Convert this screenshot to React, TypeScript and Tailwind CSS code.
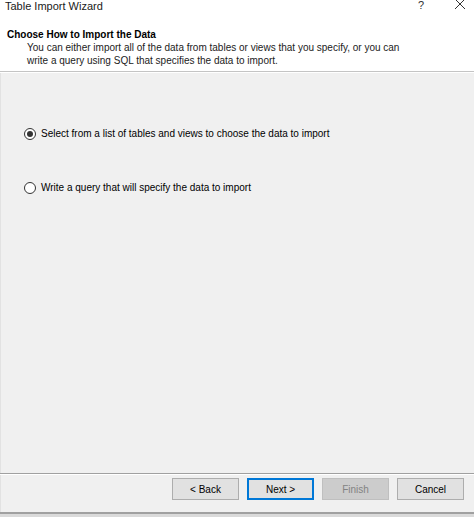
export default function App() {
  return (
    <div className="flex h-[517px] w-[474px] flex-col overflow-hidden bg-white font-['Liberation_Sans',Arial,sans-serif] text-black">
      {/* title bar */}
      <div className="flex h-[14px] items-start justify-between">
        <span className="-mt-[1px] pl-[5px] text-[11px] leading-[14px] text-[#1a1a1a]">
          Table Import Wizard
        </span>
        <div className="-mt-[1px] flex items-start gap-[30px] pr-[8px] text-[#333]">
          <span className="text-[11px] leading-[12px]">?</span>
          <svg width="12" height="12" viewBox="0 0 12 12" className="-mt-[1px]">
            <path d="M1 1 L11 11 M11 1 L1 11" stroke="#333" strokeWidth="1" />
          </svg>
        </div>
      </div>

      {/* header */}
      <div className="flex h-[57px] flex-col pl-[7px] pt-[14px]">
        <h1 className="text-[10px] font-bold leading-[13px]">Choose How to Import the Data</h1>
        <p className="pl-[20px] text-[10px] leading-[13px] text-[#222]">
          You can either import all of the data from tables or views that you specify, or you can
          <br />
          write a query using SQL that specifies the data to import.
        </p>
      </div>
      <div className="h-px bg-[#c4c4c4]" />
      <div className="h-px bg-[#ffffff]" />

      {/* body */}
      <div className="flex h-[400px] flex-col gap-[42px] border-l border-[#e2e2e2] bg-[#f0f0f0] pl-[23px] pt-[55px] text-[10px]">
        <label className="flex items-center gap-[5px] leading-[12px]">
          <span className="flex h-[12px] w-[12px] items-center justify-center rounded-full border border-[#333] bg-white">
            <span className="h-[6px] w-[6px] rounded-full bg-[#333]" />
          </span>
          <span>Select from a list of tables and views to choose the data to import</span>
        </label>
        <label className="flex items-center gap-[5px] leading-[12px]">
          <span className="h-[12px] w-[12px] rounded-full border border-[#333] bg-white" />
          <span>Write a query that will specify the data to import</span>
        </label>
      </div>

      {/* footer */}
      <div className="h-px bg-[#a0a0a0]" />
      <div className="h-px bg-white" />
      <div className="flex h-[37px] items-start justify-end gap-[8px] border-l border-[#e2e2e2] bg-[#f0f0f0] pr-[10px] pt-[3px] text-[10px]">
        <button className="h-[22px] w-[67px] border border-[#adadad] bg-[#e1e1e1]">&lt; Back</button>
        <button className="h-[22px] w-[67px] border-2 border-[#0078d7] bg-[#e1e1e1]">Next &gt;</button>
        <button className="h-[22px] w-[67px] border border-[#bfbfbf] bg-[#cccccc] text-[#838383]">Finish</button>
        <button className="h-[22px] w-[67px] border border-[#adadad] bg-[#e1e1e1]">Cancel</button>
      </div>
      <div className="h-[2px] bg-[#a0a0a0]" />
      <div className="flex-1 bg-[#dadada]" />
    </div>
  )
}
